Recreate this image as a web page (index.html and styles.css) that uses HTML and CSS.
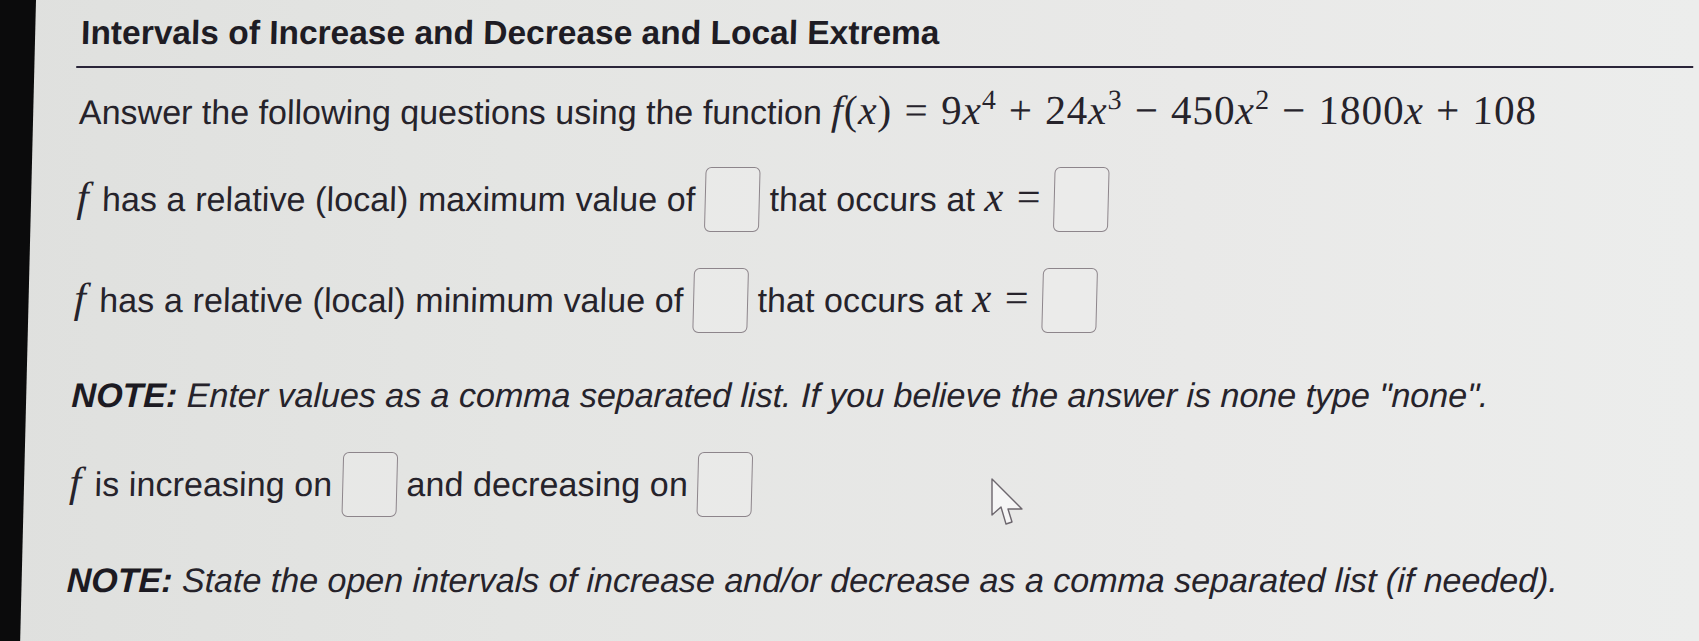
FILE: index.html
```html
<!DOCTYPE html>
<html lang="en">
<head>
<meta charset="utf-8">
<title>Intervals of Increase and Decrease and Local Extrema</title>
<link rel="stylesheet" href="styles.css">
</head>
<body>
<div class="screen">
  <div class="bezel"></div>
  <main class="sheet">
    <h1 class="title">Intervals of Increase and Decrease and Local Extrema</h1>
    <hr class="rule">
    <p class="line intro">Answer the following questions using the function <span class="math"><i>f</i>(<i>x</i>)<span class="op">=</span>9<i>x</i><sup>4</sup><span class="op">+</span>24<i>x</i><sup>3</sup><span class="op">−</span>450<i>x</i><sup>2</sup><span class="op">−</span>1800<i>x</i><span class="op">+</span>108</span></p>
    <div class="row row-max"><span class="math lead"><i>f</i></span> has a relative (local) maximum value of <span class="box"></span> that occurs at <span class="math"><i>x</i><span class="op">=</span></span><span class="box"></span></div>
    <div class="row row-min"><span class="math lead"><i>f</i></span> has a relative (local) minimum value of <span class="box"></span> that occurs at <span class="math"><i>x</i><span class="op">=</span></span><span class="box"></span></div>
    <p class="line note note-values"><b>NOTE:</b> Enter values as a comma separated list. If you believe the answer is none type "none".</p>
    <div class="row row-intervals"><span class="math lead"><i>f</i></span> is increasing on <span class="box"></span> and decreasing on <span class="box"></span></div>
    <p class="line note note-intervals"><b>NOTE:</b> State the open intervals of increase and/or decrease as a comma separated list (if needed).</p>
  </main>
  <svg class="cursor" width="32" height="48" viewBox="0 0 32 48" aria-hidden="true">
    <path d="M1 1 L1 37 L10 29 L15 46 L21 44 L17 31 L31 31 Z" fill="#f6f6f6" stroke="#6d676e" stroke-width="1.4" stroke-linejoin="round"/>
  </svg>
</div>
</body>
</html>
```
FILE: styles.css
```css
html, body {
  margin: 0;
  padding: 0;
}

body {
  width: 1699px;
  height: 641px;
  overflow: hidden;
  font-family: "Liberation Sans", Arial, sans-serif;
  color: #26232b;
}

.screen {
  position: relative;
  display: flex;
  width: 1699px;
  height: 641px;
  background: linear-gradient(90deg, #dfe0de 0%, #e4e5e3 30%, #e9e9e8 70%, #ecedec 100%);
}

.bezel {
  flex: 0 0 36px;
  height: 100%;
  background: #0b0b0c;
  clip-path: polygon(0 0, 100% 0, 56% 100%, 0 100%);
}

.sheet {
  flex: 1;
  padding: 14px 4px 0 42px;
  transform: skewX(-1.5deg);
  transform-origin: 0 0;
}

.title {
  margin: 0 0 0 4px;
  font-size: 33.5px;
  line-height: 38px;
  font-weight: bold;
  color: #1e1c24;
}

.rule {
  margin: 14px 0 0 0;
  height: 2px;
  border: 0;
  background: #2a2539;
}

.line {
  margin: 0 0 0 4px;
  font-size: 34px;
  line-height: 40px;
  white-space: nowrap;
}

.intro {
  margin-top: 22px;
}

.intro .math {
  font-size: 41px;
}

.row {
  margin-left: 4px;
  height: 65px;
  font-size: 34px;
  line-height: 65px;
  letter-spacing: 0.1px;
  white-space: nowrap;
}

.row-max {
  margin-top: 35px;
}

.row-min {
  margin-top: 36px;
}

.note-values {
  margin-top: 42px;
}

.row-intervals {
  margin-top: 37px;
}

.note-intervals {
  margin-top: 43px;
}

.note {
  font-style: italic;
}

.note b {
  font-weight: bold;
  color: #1c1a22;
}

.math {
  font-family: "Liberation Serif", "Times New Roman", serif;
  font-size: 42px;
  line-height: 1;
  letter-spacing: 1px;
}

.math i {
  font-style: italic;
}

.lead {
  margin-right: 3px;
}

.math sup {
  font-size: 0.68em;
  line-height: 0;
  vertical-align: 15px;
}

.op {
  margin: 0 0.3em;
}

.box {
  display: inline-block;
  box-sizing: border-box;
  width: 55px;
  height: 65px;
  vertical-align: top;
  border: 1.5px solid #8d858b;
  border-radius: 6px;
  background: rgba(240, 240, 240, 0.35);
}

.cursor {
  position: absolute;
  left: 991px;
  top: 478px;
}
```
